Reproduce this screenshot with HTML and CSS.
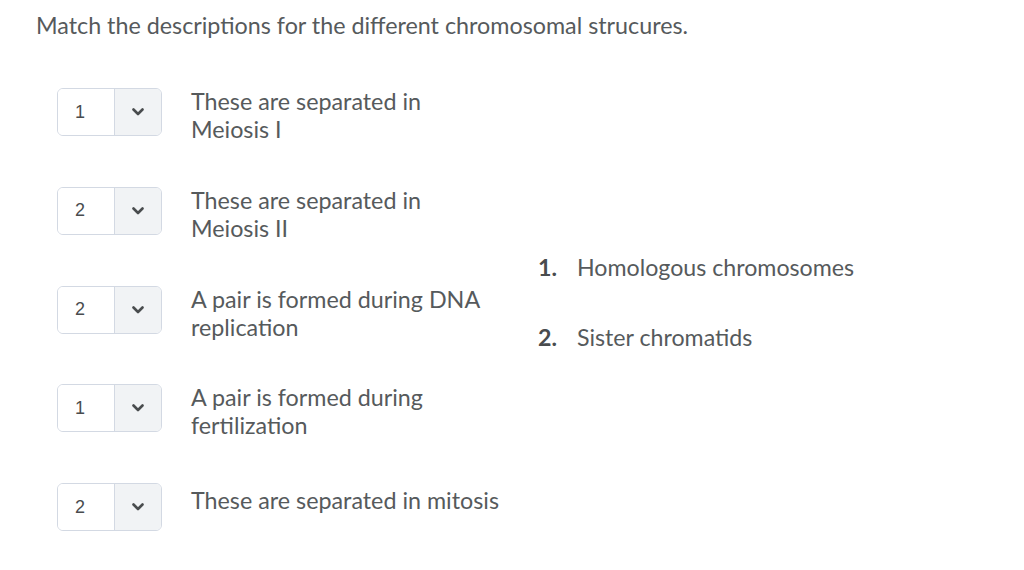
FILE: index.html
```html
<!DOCTYPE html>
<html lang="en">
<head>
<meta charset="utf-8">
<title>Matching question</title>
<link rel="stylesheet" href="styles.css">
</head>
<body>
<div class="question">
  <p class="prompt">Match the descriptions for the different chromosomal strucures.</p>
  <div class="match">
    <div class="choices">
      <div class="row">
        <div class="select"><span class="value">1</span><span class="arrow"><svg width="12" height="8" viewBox="0 0 12 8"><path d="M1.5 1.5 6 6l4.5-4.5" fill="none" stroke="currentColor" stroke-width="2.6" stroke-linecap="round" stroke-linejoin="round"/></svg></span></div>
        <div class="desc">These are separated in<br>Meiosis I</div>
      </div>
      <div class="row">
        <div class="select"><span class="value">2</span><span class="arrow"><svg width="12" height="8" viewBox="0 0 12 8"><path d="M1.5 1.5 6 6l4.5-4.5" fill="none" stroke="currentColor" stroke-width="2.6" stroke-linecap="round" stroke-linejoin="round"/></svg></span></div>
        <div class="desc">These are separated in<br>Meiosis II</div>
      </div>
      <div class="row">
        <div class="select"><span class="value">2</span><span class="arrow"><svg width="12" height="8" viewBox="0 0 12 8"><path d="M1.5 1.5 6 6l4.5-4.5" fill="none" stroke="currentColor" stroke-width="2.6" stroke-linecap="round" stroke-linejoin="round"/></svg></span></div>
        <div class="desc">A pair is formed during DNA<br>replication</div>
      </div>
      <div class="row">
        <div class="select"><span class="value">1</span><span class="arrow"><svg width="12" height="8" viewBox="0 0 12 8"><path d="M1.5 1.5 6 6l4.5-4.5" fill="none" stroke="currentColor" stroke-width="2.6" stroke-linecap="round" stroke-linejoin="round"/></svg></span></div>
        <div class="desc">A pair is formed during<br>fertilization</div>
      </div>
      <div class="row">
        <div class="select"><span class="value">2</span><span class="arrow"><svg width="12" height="8" viewBox="0 0 12 8"><path d="M1.5 1.5 6 6l4.5-4.5" fill="none" stroke="currentColor" stroke-width="2.6" stroke-linecap="round" stroke-linejoin="round"/></svg></span></div>
        <div class="desc single">These are separated in mitosis</div>
      </div>
    </div>
    <ol class="answers">
      <li><span class="num">1.</span>Homologous chromosomes</li>
      <li><span class="num">2.</span>Sister chromatids</li>
    </ol>
  </div>
</div>
</body>
</html>
```

FILE: styles.css
```css
* { box-sizing: border-box; }

body {
  margin: 0;
  background: #ffffff;
  color: #565a5c;
  font-family: Lato, "Open Sans", sans-serif;
}

.question {
  padding: 10px 0 0 36px;
}

.prompt {
  margin: 0;
  font-size: 23.3px;
  line-height: 30px;
}

.match {
  display: flex;
  align-items: center;
  margin-top: 48px;
  padding-left: 21px;
}

.choices {
  display: flex;
  flex-direction: column;
  gap: 42.8px;
  width: 481px;
}

.row {
  display: flex;
  align-items: flex-start;
  gap: 29px;
  min-height: 56px;
}

.select {
  display: flex;
  width: 105px;
  height: 48px;
  border: 1px solid #d3d9e3;
  border-radius: 6px;
  overflow: hidden;
  flex-shrink: 0;
}

.value {
  width: 57px;
  padding-left: 17px;
  display: flex;
  align-items: center;
  font-family: "Liberation Sans", Arial, sans-serif;
  font-size: 18px;
  color: #494c4e;
  background: #ffffff;
  border-right: 1px solid #d3d9e3;
}

.arrow {
  flex: 1;
  display: flex;
  align-items: center;
  justify-content: center;
  background: #f1f3f5;
  color: #494c4e;
}

.desc {
  font-size: 23.3px;
  line-height: 28px;
  margin-top: -1px;
}

.desc.single {
  margin-top: 3px;
}

.answers {
  list-style: none;
  margin: 0 0 24px;
  padding: 0;
  display: flex;
  flex-direction: column;
  gap: 42px;
}

.answers li {
  display: flex;
  font-size: 23.2px;
  line-height: 28px;
}

.num {
  width: 39px;
  font-weight: 700;
  color: #494c4e;
}
```
